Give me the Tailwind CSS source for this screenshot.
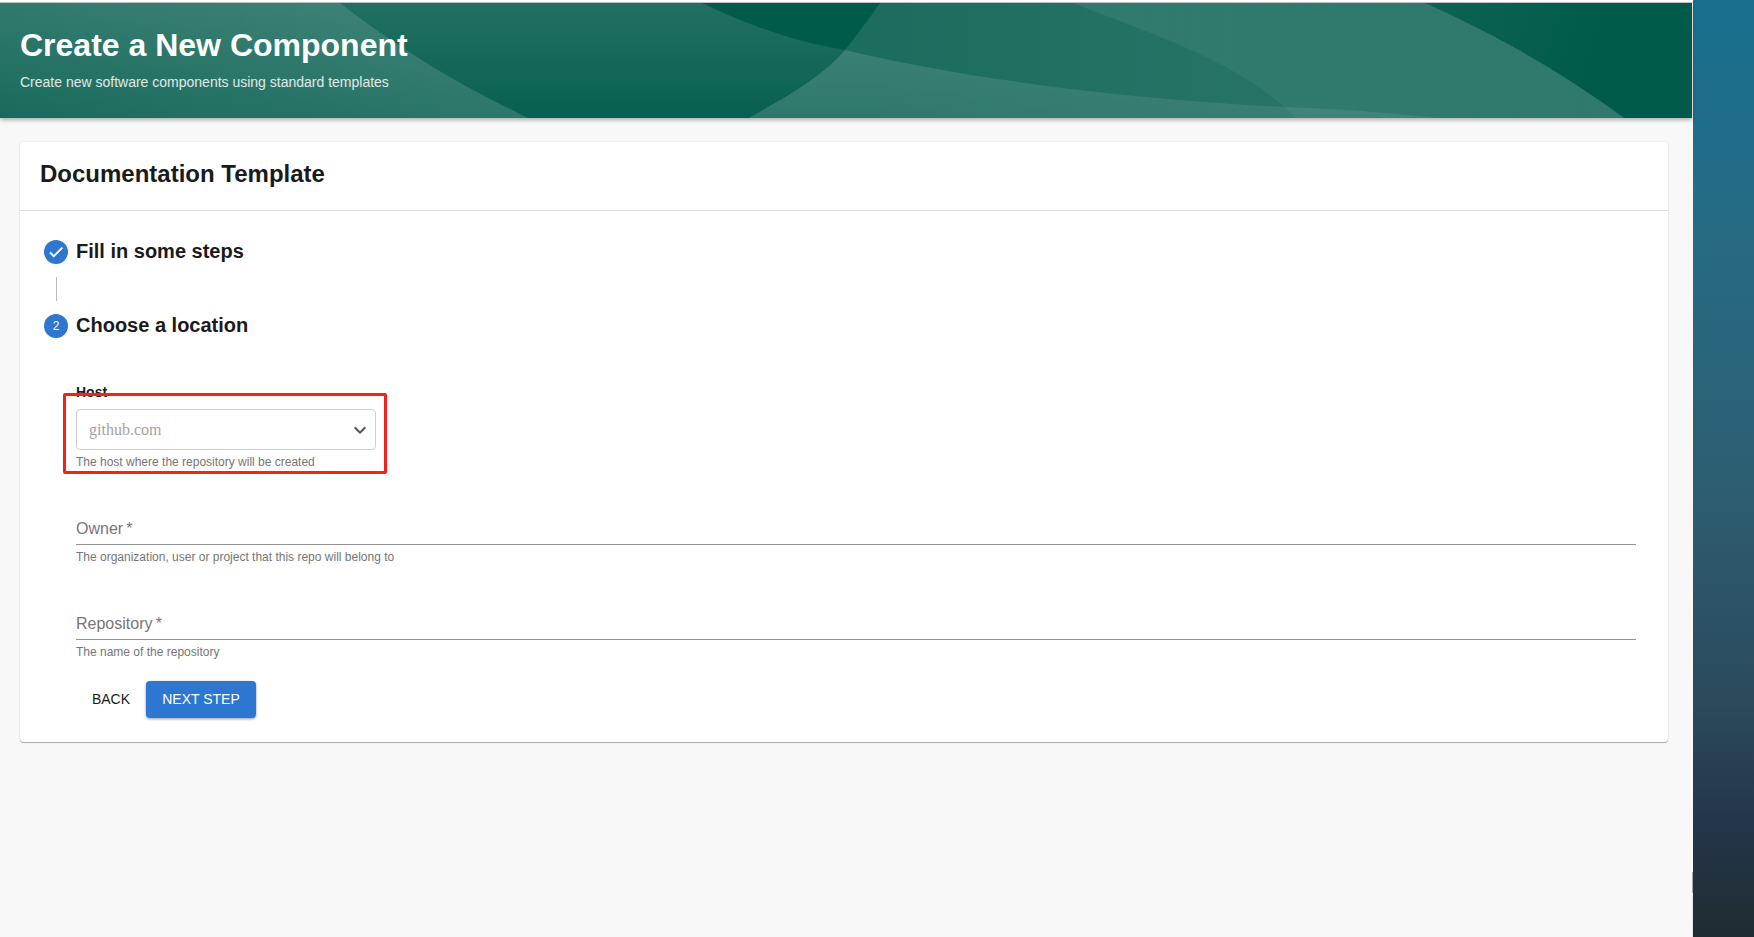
<!doctype html>
<html><head><meta charset="utf-8">
<script src="https://cdn.jsdelivr.net/npm/@tailwindcss/browser@4"></script>
</head>
<body class="m-0 h-[937px] overflow-hidden font-['Liberation_Sans',Arial,sans-serif]">
<div class="flex h-[937px] w-[1754px]">
<main class="relative flex w-[1693px] flex-col bg-[#f8f8f8]">
  <div class="h-[3px] border-b border-[#c8c8c8] bg-white"></div>
  <header class="relative h-[115px] w-[1692px] overflow-hidden bg-[#005b4b] px-[20px] shadow-[0_2px_4px_rgba(0,0,0,0.3)]">
    <svg class="absolute left-0 top-0" width="1692" height="115" viewBox="0 3 1692 115" fill="none">
      <defs>
        <linearGradient id="g1" gradientUnits="userSpaceOnUse" x1="0" y1="60" x2="530" y2="60"><stop offset="0" stop-color="#fff" stop-opacity=".07"/><stop offset="1" stop-color="#fff" stop-opacity=".15"/></linearGradient>
        <linearGradient id="g2" gradientUnits="userSpaceOnUse" x1="0" y1="3" x2="0" y2="118"><stop offset="0" stop-color="#fff" stop-opacity=".13"/><stop offset="1" stop-color="#fff" stop-opacity=".03"/></linearGradient>
        <linearGradient id="g3" gradientUnits="userSpaceOnUse" x1="880" y1="60" x2="1620" y2="60"><stop offset="0" stop-color="#fff" stop-opacity=".11"/><stop offset="1" stop-color="#fff" stop-opacity=".19"/></linearGradient>
        <linearGradient id="g4" gradientUnits="userSpaceOnUse" x1="1073" y1="60" x2="1600" y2="60"><stop offset="0" stop-color="#fff" stop-opacity=".07"/><stop offset="1" stop-color="#fff" stop-opacity="0"/></linearGradient>
        <linearGradient id="g5" gradientUnits="userSpaceOnUse" x1="1425" y1="3" x2="1600" y2="60"><stop offset="0" stop-color="#fff" stop-opacity=".05"/><stop offset="1" stop-color="#fff" stop-opacity="0"/></linearGradient>
      </defs>
      <path d="M1425 3Q1535 52 1624 118H1692V3Z" fill="url(#g5)"/>
      <path d="M0 3H702C745 24 795 42 845 50C960 78 1130 100 1285 107C1340 109 1380 112 1440 118H0Z" fill="url(#g2)"/>
      <path d="M880 3C868 20 857 35 845 50C825 74 790 95 749 118H1624Q1535 52 1425 3Z" fill="url(#g3)"/>
      <path d="M845 50C960 78 1130 100 1285 107C1340 109 1380 112 1440 118H749C790 95 825 74 845 50Z" fill="#fff" fill-opacity=".05"/>
      <path d="M1073 3C1140 30 1240 60 1296 118H1624Q1535 52 1425 3Z" fill="url(#g4)"/>
      <path d="M0 3H340C400 50 460 85 528 118H0Z" fill="url(#g1)"/>
    </svg>
    <h1 class="relative mt-[23px] text-[32px] font-bold leading-[38px] text-white">Create a New Component</h1>
    <p class="relative mt-[8px] text-[14px] leading-[20px] text-white/85">Create new software components using standard templates</p>
  </header>
  <div class="pl-[20px] pr-[25px] pt-[24px]">
    <section class="h-[600px] rounded-[4px] bg-white shadow-[0_1px_1px_rgba(0,0,0,0.3),0_0_2px_rgba(0,0,0,0.12)]">
      <div class="flex h-[69px] items-center border-b border-[#dedede] px-[20px] pb-[4px]">
        <h2 class="text-[24px] font-bold leading-[28px] text-[#1a1a1a]">Documentation Template</h2>
      </div>
      <div class="px-[24px] pt-[29px]">
        <div class="flex h-[24px] items-center gap-[8px]">
          <span class="flex size-[24px] items-center justify-center rounded-full bg-[#2e77d0]">
            <svg width="18" height="18" viewBox="0 0 24 24" fill="#fff" stroke="#fff" stroke-width="0.8"><path d="M9 16.17 4.83 12l-1.42 1.41L9 19 21 7l-1.41-1.41z"/></svg>
          </span>
          <span class="pb-[2px] text-[20px] font-bold leading-[24px] text-[#1a1a1a]">Fill in some steps</span>
        </div>
        <div class="ml-[11.5px] mt-[13px] h-[24px] w-px bg-[#bdbdbd]"></div>
        <div class="mt-[13px] flex h-[24px] items-center gap-[8px]">
          <span class="flex size-[24px] items-center justify-center rounded-full bg-[#2e77d0] text-[12px] leading-none text-white">2</span>
          <span class="pb-[2px] text-[20px] font-bold leading-[24px] text-[#1a1a1a]">Choose a location</span>
        </div>
        <div class="ml-[32px] w-[1560px] pt-[46px]">
          <div class="text-[14px] font-bold leading-[16px] text-[#1a1a1a]">Host</div>
          <div class="mt-[9px] flex h-[41px] w-[300px] items-center justify-between rounded-[4px] border border-[#cfcfcf] pl-[12px] pr-[3px] font-['Liberation_Serif',serif] text-[16px] text-[#a3a3a3]">
            github.com
            <svg width="24" height="24" viewBox="0 0 24 24" fill="#555"><path d="M7.41 8.59 12 13.17l4.59-4.58L18 10l-6 6-6-6z"/></svg>
          </div>
          <p class="mt-[4px] text-[12px] leading-[16px] text-[#767676]">The host where the repository will be created</p>
          <div class="mt-[48px] border-b-[1px] border-[#949494] pb-[4px] text-[16px] leading-[22px] text-[#767676]">Owner&thinsp;*</div>
          <p class="mt-[4px] text-[12px] leading-[16px] text-[#767676]">The organization, user or project that this repo will belong to</p>
          <div class="mt-[48px] border-b-[1px] border-[#949494] pb-[4px] text-[16px] leading-[22px] text-[#767676]">Repository&thinsp;*</div>
          <p class="mt-[4px] text-[12px] leading-[16px] text-[#767676]">The name of the repository</p>
          <div class="mt-[21px] flex items-center">
            <button class="h-[37px] w-[70px] text-[14px] text-[#1a1a1a]">BACK</button>
            <button class="h-[37px] w-[110px] rounded-[4px] bg-[#2e77d0] text-[14px] text-white shadow-[0_1px_3px_rgba(0,0,0,0.4)]">NEXT STEP</button>
          </div>
        </div>
      </div>
    </section>
  </div>
  <div class="absolute left-[63px] top-[393px] h-[81px] w-[324px] rounded-[2px] border-[3px] border-[#f5201a]"></div>
  <div class="absolute right-0 top-[872px] h-[21px] w-px bg-[#aaaaaa]"></div>
  <div class="absolute bottom-0 right-0 h-[42px] w-px bg-[#e4e4e4]"></div>
</main>
<aside class="flex-1 bg-[linear-gradient(180deg,#18708f_0%,#276a84_26%,#2d5f73_50%,#2b4a5c_75%,#24364c_87%,#1f2c30_100%)]"></aside>
</div>
</body></html>
